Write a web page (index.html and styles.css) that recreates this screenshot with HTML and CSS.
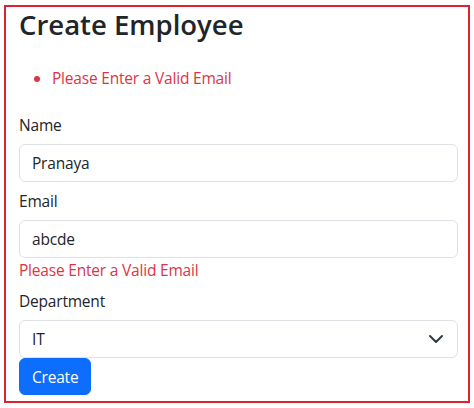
FILE: index.html
```html
<!DOCTYPE html>
<html lang="en">
<head>
<meta charset="utf-8">
<title>Create Employee</title>
<link rel="stylesheet" href="styles.css">
</head>
<body>
<div class="frame">
  <h2 class="title">Create Employee</h2>
  <ul class="summary">
    <li>Please Enter a Valid Email</li>
  </ul>
  <form class="form">
    <div class="field">
      <label class="label" for="name">Name</label>
      <input class="control" id="name" type="text" value="Pranaya">
    </div>
    <div class="field">
      <label class="label" for="email">Email</label>
      <input class="control" id="email" type="text" value="abcde">
      <div class="error">Please Enter a Valid Email</div>
    </div>
    <div class="field">
      <label class="label" for="dept">Department</label>
      <div class="select-wrap">
        <select class="control select" id="dept">
          <option>IT</option>
        </select>
        <svg class="chevron" width="14" height="8" viewBox="0 0 14 8" aria-hidden="true"><path d="M1 1 L7 7 L13 1" fill="none" stroke="#343a40" stroke-width="2" stroke-linecap="round" stroke-linejoin="round"/></svg>
      </div>
    </div>
    <button class="btn" type="button">Create</button>
  </form>
</div>
</body>
</html>
```
FILE: styles.css
```css
html, body {
  margin: 0;
  padding: 0;
  background: #ffffff;
}
body {
  font-family: "Open Sans", "Noto Sans", sans-serif;
  color: #212529;
  font-size: 15.5px;
  letter-spacing: -0.2px;
}
.frame {
  box-sizing: border-box;
  margin: 5px 0 0 4px;
  width: 466px;
  height: 398px;
  border: 2px solid #dc2431;
  padding: 3px 10px 0 13px;
}
.title {
  margin: 0;
  font-size: 27.5px;
  line-height: 30px;
  font-weight: 600;
  letter-spacing: 0;
}
.summary {
  margin: 26px 0 0;
  padding-left: 33px;
  color: #dc3545;
  line-height: 24px;
}
.form {
  margin: 23px 0 0;
  display: flex;
  flex-direction: column;
}
.field {
  display: flex;
  flex-direction: column;
  margin-bottom: 7px;
}
.field:last-of-type {
  margin-bottom: 0;
}
.label {
  line-height: 24px;
  margin-bottom: 7px;
}
.control {
  box-sizing: border-box;
  width: 439px;
  height: 38px;
  margin: 0;
  padding: 6px 12px;
  border: 1px solid #dee2e6;
  border-radius: 6px;
  font-family: inherit;
  font-size: 15.5px;
  letter-spacing: -0.2px;
  line-height: 24px;
  color: #212529;
  background: #ffffff;
}
.error {
  color: #dc3545;
  line-height: 24px;
}
.select-wrap {
  position: relative;
  width: 439px;
}
.select {
  appearance: none;
  -webkit-appearance: none;
}
.chevron {
  position: absolute;
  right: 15px;
  top: 15px;
  pointer-events: none;
}
.btn {
  align-self: flex-start;
  box-sizing: border-box;
  height: 37px;
  padding: 0 12px;
  border: 1px solid #0d6efd;
  border-radius: 6px;
  background: #0d6efd;
  color: #ffffff;
  font-family: inherit;
  font-size: 15.5px;
  letter-spacing: -0.2px;
  line-height: 24px;
}
```
